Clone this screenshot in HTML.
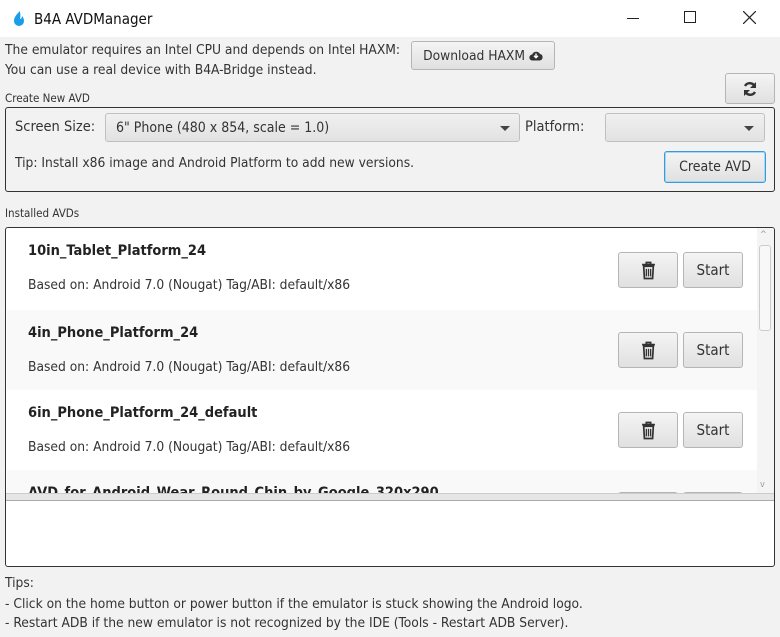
<!DOCTYPE html>
<html><head><meta charset="utf-8"><style>
*{box-sizing:border-box;margin:0;padding:0}
body{width:780px;height:637px;overflow:hidden;background:#f2f2f2;font-family:"Liberation Sans Narrow","DejaVu Sans Condensed","Liberation Sans",sans-serif;font-size:13.7px;color:#333;position:relative}
.a{position:absolute;white-space:nowrap}
.btn{position:absolute;border:1px solid #b5b5b5;border-radius:3px;background:linear-gradient(#f4f4f4,#e0e0e0);display:flex;align-items:center;justify-content:center;color:#333}
.combo{position:absolute;border:1px solid #c0c0c0;border-radius:3px;background:linear-gradient(#f0f0f0,#e2e2e2)}
.arrow{position:absolute;width:0;height:0;border-left:5px solid transparent;border-right:5px solid transparent;border-top:5px solid #444}
.row{position:absolute;left:1px;width:750px;height:80px}
.row .t{position:absolute;left:21px;top:15px;font-weight:bold;font-size:14.5px;color:#222}
.row .d{position:absolute;left:21px;top:49px;font-size:13.7px}
</style></head><body>
<div class="a" style="left:0;top:0;width:780px;height:37px;background:#fff"></div>
<svg class="a" style="left:11px;top:10px" width="16" height="17" viewBox="0 0 16 17"><path d="M9 1C6 4 3 7 3 11a5 5 0 0 0 10 0c0-2-1-4-2-5 0 2-1 3-2 3 1-3 0-6 0-8z" fill="#1a9ee8"/></svg>
<div class="a" style="left:34px;top:10px;font-size:15px;color:#111">B4A AVDManager</div>
<div class="a" style="left:627px;top:18px;width:12px;height:1px;background:#222"></div>
<div class="a" style="left:684px;top:11px;width:12px;height:12px;border:1px solid #222"></div>
<svg class="a" style="left:743px;top:11px" width="13" height="13"><path d="M0 0L13 13M13 0L0 13" stroke="#222" stroke-width="1.2"/></svg>

<div class="a" style="left:5px;top:42px">The emulator requires an Intel CPU and depends on Intel HAXM:</div>
<div class="a" style="left:5px;top:62px">You can use a real device with B4A-Bridge instead.</div>
<div class="btn" style="left:411px;top:41px;width:144px;height:29px">Download HAXM&nbsp;<svg width="14" height="11" viewBox="0 0 14 11"><path d="M3.5 10.5a3 3 0 0 1-.3-6A4.3 4.3 0 0 1 11 4a3.3 3.3 0 0 1-.3 6.5z" fill="#333"/><path d="M7 3.5v4M5 5.8l2 2 2-2" stroke="#fff" stroke-width="1.4" fill="none"/></svg></div>
<div class="btn" style="left:725px;top:73px;width:50px;height:31px"><svg width="16" height="16" viewBox="0 0 16 16"><path d="M13 6A5.5 5.5 0 0 0 3 5" stroke="#333" stroke-width="2.4" fill="none"/><path d="M14 1v6H8z" fill="#333"/><path d="M3 10a5.5 5.5 0 0 0 10 1" stroke="#333" stroke-width="2.4" fill="none"/><path d="M2 15V9h6z" fill="#333"/></svg></div>
<div class="a" style="left:5px;top:91px;font-size:11.5px">Create New AVD</div>

<div class="a" style="left:5px;top:107px;width:770px;height:85px;border:1px solid #333;border-radius:3px"></div>
<div class="a" style="left:15px;top:119px;font-size:14.5px">Screen Size:</div>
<div class="combo" style="left:105px;top:113px;width:415px;height:29px"><span class="a" style="left:10px;top:6px;font-size:14px">6" Phone (480 x 854, scale = 1.0)</span><span class="arrow" style="left:394px;top:12px"></span></div>
<div class="a" style="left:525px;top:119px;font-size:14.5px">Platform:</div>
<div class="combo" style="left:605px;top:113px;width:160px;height:29px"><span class="arrow" style="left:138px;top:12px"></span></div>
<div class="a" style="left:15px;top:155px">Tip: Install x86 image and Android Platform to add new versions.</div>
<div class="btn" style="left:664px;top:151px;width:102px;height:32px;border:1px solid #3b9ad6;box-shadow:inset 0 0 0 1px #a9d6f3;font-size:14px">Create AVD</div>

<div class="a" style="left:5px;top:206px;font-size:11.5px">Installed AVDs</div>
<div class="a" style="left:5px;top:227px;width:770px;height:340px;border:1px solid #333;border-radius:3px;background:#fff;overflow:hidden">
 <div style="position:absolute;left:0;top:0;width:768px;height:265px;overflow:hidden">
  <div class="row" style="top:0;background:#fff"><div class="t">10in_Tablet_Platform_24</div><div class="d">Based on: Android 7.0 (Nougat) Tag/ABI: default/x86</div></div>
  <div class="row" style="top:82px;background:#f9f9f9"><div class="t">4in_Phone_Platform_24</div><div class="d">Based on: Android 7.0 (Nougat) Tag/ABI: default/x86</div></div>
  <div class="row" style="top:162px;background:#fff"><div class="t">6in_Phone_Platform_24_default</div><div class="d">Based on: Android 7.0 (Nougat) Tag/ABI: default/x86</div></div>
  <div class="row" style="top:242px;background:#f9f9f9"><div class="t">AVD_for_Android_Wear_Round_Chin_by_Google_320x290</div></div>
  <div class="btn" style="left:612px;top:24px;width:60px;height:36px"><svg width="15" height="19" viewBox="0 0 14 17"><path d="M1 3h12M5 3V1h4v2M2.5 4.5h9l-.7 11.5H3.2z" stroke="#333" stroke-width="1.6" fill="none"/><path d="M5 7v7M7 7v7M9 7v7" stroke="#333" stroke-width="1.2"/></svg></div>
  <div class="btn" style="left:677px;top:24px;width:60px;height:36px;font-size:15px">Start</div>
  <div class="btn" style="left:612px;top:104px;width:60px;height:36px"><svg width="15" height="19" viewBox="0 0 14 17"><path d="M1 3h12M5 3V1h4v2M2.5 4.5h9l-.7 11.5H3.2z" stroke="#333" stroke-width="1.6" fill="none"/><path d="M5 7v7M7 7v7M9 7v7" stroke="#333" stroke-width="1.2"/></svg></div>
  <div class="btn" style="left:677px;top:104px;width:60px;height:36px;font-size:15px">Start</div>
  <div class="btn" style="left:612px;top:184px;width:60px;height:36px"><svg width="15" height="19" viewBox="0 0 14 17"><path d="M1 3h12M5 3V1h4v2M2.5 4.5h9l-.7 11.5H3.2z" stroke="#333" stroke-width="1.6" fill="none"/><path d="M5 7v7M7 7v7M9 7v7" stroke="#333" stroke-width="1.2"/></svg></div>
  <div class="btn" style="left:677px;top:184px;width:60px;height:36px;font-size:15px">Start</div>
  <div class="btn" style="left:612px;top:264px;width:60px;height:36px"></div>
  <div class="btn" style="left:677px;top:264px;width:60px;height:36px"></div>
  <div style="position:absolute;left:751px;top:0;width:17px;height:265px;background:#f4f4f4"></div>
  <div style="position:absolute;left:753px;top:17px;width:12px;height:86px;border:1px solid #ccc;border-radius:3px;background:#f8f8f8"></div>
  <div style="position:absolute;left:754px;top:2px;font-size:9px;color:#999">^</div>
  <div style="position:absolute;left:754px;top:252px;font-size:9px;color:#999">v</div>
 </div>
 <div style="position:absolute;left:0;top:265px;width:768px;height:8px;background:#e6e6e6;border-top:1px solid #ccc;border-bottom:1px solid #aaa"></div>
</div>
<div class="a" style="left:5px;top:575px">Tips:</div>
<div class="a" style="left:5px;top:596px">- Click on the home button or power button if the emulator is stuck showing the Android logo.</div>
<div class="a" style="left:5px;top:615px">- Restart ADB if the new emulator is not recognized by the IDE (Tools - Restart ADB Server).</div>
</body></html>
